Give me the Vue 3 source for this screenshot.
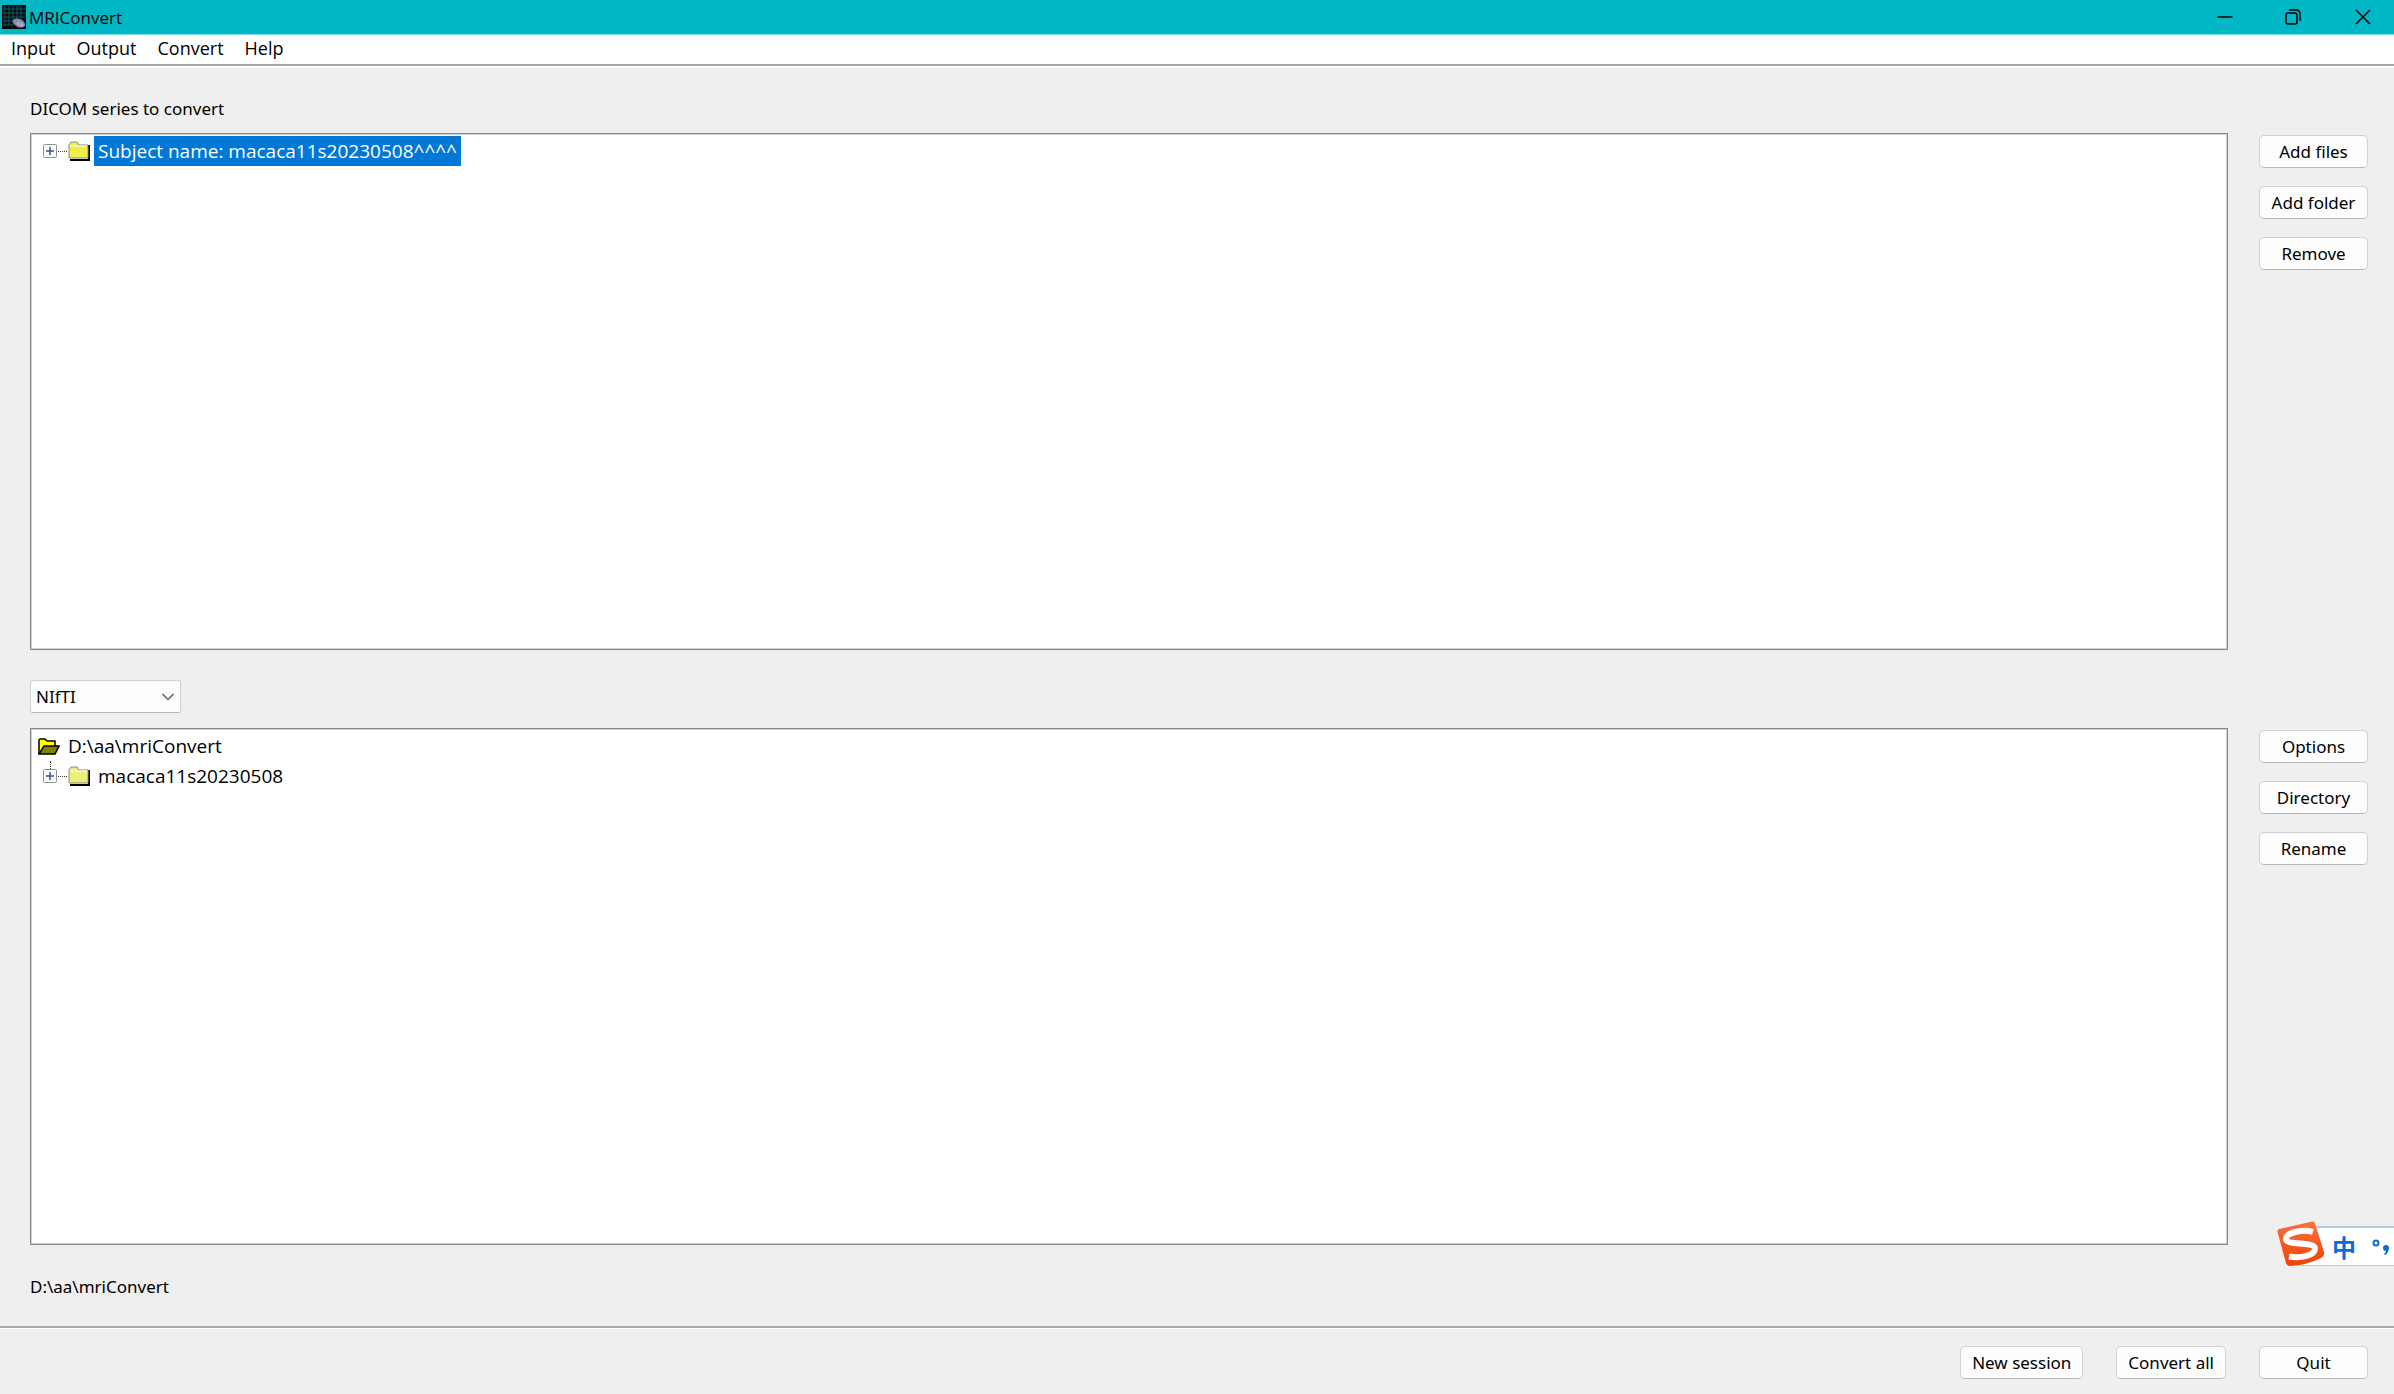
<script setup>
import { ref } from 'vue';

const menus = ['Input', 'Output', 'Convert', 'Help'];
const inputActions = ['Add files', 'Add folder', 'Remove'];
const outputActions = ['Options', 'Directory', 'Rename'];
const sessionActions = ['New session', 'Convert all', 'Quit'];

const format = ref('NIfTI');
const directory = 'D:\\aa\\mriConvert';
const subject = 'Subject name: macaca11s20230508^^^^';
const outputName = 'macaca11s20230508';
</script>

<template>
  <div class="window">
    <header class="titlebar">
      <svg class="app-icon" viewBox="0 0 24 24" aria-hidden="true">
        <rect width="24" height="24" fill="#080b10" />
        <path
          d="M3 1v19M7 1v19M11 1v19M15 1v16M19 1v13M1 4h22M1 8h22M1 12h21M1 16h12M1 20h10"
          stroke="#0b5a5c"
          stroke-width="1"
        />
        <ellipse cx="17" cy="18" rx="6.5" ry="4" transform="rotate(25 17 18)" fill="#8d88b0" />
        <ellipse cx="18" cy="19" rx="4" ry="2" transform="rotate(25 18 19)" fill="#a9a2c8" />
      </svg>
      <h1>MRIConvert</h1>
      <div class="caption-buttons">
        <button type="button" aria-label="Minimize">
          <svg viewBox="0 0 16 16"><path d="M0.5 8h15" /></svg>
        </button>
        <button type="button" aria-label="Restore">
          <svg viewBox="0 0 16 16">
            <rect x="1" y="4" width="11" height="11" rx="2" />
            <path d="M4 1h7.5a3.5 3.5 0 0 1 3.5 3.5V12" />
          </svg>
        </button>
        <button type="button" aria-label="Close">
          <svg viewBox="0 0 16 16"><path d="M1 1l14 14M15 1L1 15" /></svg>
        </button>
      </div>
    </header>

    <nav class="menubar">
      <button v-for="menu in menus" :key="menu" type="button">{{ menu }}</button>
    </nav>

    <main class="content">
      <p class="label">DICOM series to convert</p>

      <section class="panel">
        <ul class="tree">
          <li class="node child">
            <button class="expander" type="button" aria-label="Expand subject">
              <svg viewBox="0 0 14 14">
                <rect x="0.5" y="0.5" width="13" height="13" rx="1" fill="#fafafa" stroke="#919191" />
                <path d="M3 7h8M7 3v8" stroke="#37509b" stroke-width="1.5" />
              </svg>
            </button>
            <span class="branch"></span>
            <svg class="folder" viewBox="0 0 22 20" aria-hidden="true">
              <path d="M2 19h19V4" fill="none" stroke="#000" stroke-width="2" />
              <path d="M1 17V4l2-3h6l2 3h9v13z" fill="#eef04a" stroke="#8b8b80" />
              <path d="M2 5h17" stroke="#fff" />
            </svg>
            <span class="node-text selected">{{ subject }}</span>
          </li>
        </ul>
        <div class="actions">
          <button v-for="action in inputActions" :key="action" class="btn" type="button">{{ action }}</button>
        </div>
      </section>

      <select v-model="format" class="format" aria-label="Output format">
        <option>NIfTI</option>
      </select>

      <section class="panel">
        <ul class="tree">
          <li class="node">
            <svg class="folder-open" viewBox="0 0 22 17" aria-hidden="true">
              <path d="M1 16V2l1-1h5l2 2h8v5" fill="#ffff00" stroke="#000" stroke-width="1.5" />
              <path d="M1 16L6 8h15l-4 8z" fill="#808000" stroke="#000" stroke-width="1.5" />
            </svg>
            <span class="node-text">{{ directory }}</span>
          </li>
          <li class="node child linked">
            <button class="expander" type="button" aria-label="Expand output">
              <svg viewBox="0 0 14 14">
                <rect x="0.5" y="0.5" width="13" height="13" rx="1" fill="#fafafa" stroke="#919191" />
                <path d="M3 7h8M7 3v8" stroke="#37509b" stroke-width="1.5" />
              </svg>
            </button>
            <span class="branch"></span>
            <svg class="folder" viewBox="0 0 22 20" aria-hidden="true">
              <path d="M2 19h19V4" fill="none" stroke="#000" stroke-width="2" />
              <path d="M1 17V4l2-3h6l2 3h9v13z" fill="#eeed7c" stroke="#8b8b80" />
              <path d="M2 5h17" stroke="#fff" />
            </svg>
            <span class="node-text">{{ outputName }}</span>
          </li>
        </ul>
        <div class="actions">
          <button v-for="action in outputActions" :key="action" class="btn" type="button">{{ action }}</button>
        </div>
      </section>

      <p class="label path">{{ directory }}</p>
    </main>

    <footer class="footer">
      <button v-for="action in sessionActions" :key="action" class="btn" type="button">{{ action }}</button>
    </footer>

    <!-- input method bar floating over the window -->
    <aside class="ime">
      <svg class="ime-logo" viewBox="0 0 48 46" aria-hidden="true">
        <defs>
          <linearGradient id="ime-fill" x1="0" y1="0" x2="0" y2="1">
            <stop offset="0" stop-color="#fb7040" />
            <stop offset="1" stop-color="#ef4208" />
          </linearGradient>
        </defs>
        <path
          d="M2 8L35 .5q2-.5 3 2L47 31q1 4-3 6Q30 44 13 45q-3 0-4-3L.5 11Q0 9 2 8z"
          fill="url(#ime-fill)"
        />
        <path
          d="M36 11C27 8 9 11 9 18c0 7 29 2 29 9.500 0 7-14 10-26 8"
          fill="none"
          stroke="#fff"
          stroke-width="6"
        />
      </svg>
      <button class="ime-mode" type="button">中</button>
      <button class="ime-punct" type="button" aria-label="Punctuation">
        <svg viewBox="0 0 18 18">
          <circle cx="4" cy="5" r="2.5" fill="none" stroke="#0a6cd6" stroke-width="2" />
          <path d="M11 10a3 3 0 1 1 6 0c0 3-2 6-4 7l-1-1c1-1 2-2 2-3-2 0-3-1-3-3z" fill="#0a6cd6" />
        </svg>
      </button>
    </aside>
  </div>
</template>

<style>
body {
  margin: 0;
}
</style>

<style scoped>
.window {
  position: relative;
  display: flex;
  flex-direction: column;
  min-height: 100vh;
  overflow: hidden;
  background: #efefef;
  color: #000;
  font: 17px/24px "Noto Sans", "Open Sans", sans-serif;
}

button {
  padding: 0;
  border: 0;
  background: none;
  color: inherit;
  font: inherit;
}

.titlebar {
  display: flex;
  align-items: center;
  height: 34px;
  background: #00b7c6;
  border-bottom: 1px solid #7fdbe3;
}

.app-icon {
  width: 24px;
  height: 24px;
  margin: 0 3px 0 2px;
}

.titlebar h1 {
  flex: 1;
  margin: 0;
  font: 17px/26px "Open Sans", sans-serif;
  padding-top: 2px;
}

.caption-buttons {
  display: flex;
}

.caption-buttons button {
  display: flex;
  align-items: center;
  justify-content: center;
  width: 68px;
  height: 34px;
}

.caption-buttons button:last-child {
  width: 62px;
  margin-left: 5px;
}

.caption-buttons svg {
  width: 16px;
  height: 16px;
  fill: none;
  stroke: #000;
  stroke-width: 1.5;
}

.menubar {
  display: flex;
  align-items: flex-start;
  gap: 21px;
  height: 29px;
  padding-left: 11px;
  background: #fff;
  border-bottom: 2px solid #a6a6a6;
  box-shadow: 0 2px #fff;
  font: 18px/26px "Open Sans", sans-serif;
}

.content {
  display: flex;
  flex: 1;
  flex-direction: column;
  padding: 31px 26px 0 30px;
}

.label {
  margin: 0 0 12px;
}

.panel {
  display: flex;
  flex: 1;
  gap: 31px;
}

.tree {
  flex: 1;
  margin: 0;
  padding: 2px 0 0 7px;
  border: 1px solid #828790;
  outline: 1px solid #cfd1d4;
  outline-offset: -2px;
  background: #fff;
  list-style: none;
  font: 19px/30px "Open Sans", sans-serif;
}

.node {
  display: flex;
  align-items: center;
  height: 30px;
}

.child {
  position: relative;
  padding-left: 5px;
}

.linked::before {
  position: absolute;
  top: 0;
  left: 12px;
  height: 8px;
  border-left: 1px dotted #404040;
  content: "";
}

.expander {
  display: flex;
  width: 14px;
  height: 14px;
}

.branch {
  width: 9px;
  margin: 0 1px;
  border-top: 1px dotted #404040;
}

.folder {
  width: 22px;
  height: 20px;
  margin-right: 4px;
}

.folder-open {
  width: 22px;
  height: 17px;
  margin-right: 4px;
}

.node-text {
  padding: 0 4px;
}

.selected {
  background: #0078d7;
  color: #fff;
}

.actions {
  display: flex;
  flex-direction: column;
  gap: 18px;
  padding-top: 2px;
}

.btn {
  box-sizing: border-box;
  min-width: 109px;
  height: 33px;
  padding: 0 11px;
  border: 1px solid #d0d0d0;
  border-bottom-color: #b8b8b8;
  border-radius: 5px;
  background: #fdfdfd;
}

.format {
  box-sizing: border-box;
  width: 151px;
  height: 33px;
  margin: 30px 0 15px;
  padding: 0 5px;
  border: 1px solid #d0d0d0;
  border-bottom-color: #b8b8b8;
  border-radius: 3px;
  appearance: none;
  background: #fdfdfd
    url("data:image/svg+xml,%3Csvg xmlns='http://www.w3.org/2000/svg' viewBox='0 0 12 8'%3E%3Cpath d='M.5 1l5.5 5.5L11.5 1' fill='none' stroke='%23606060' stroke-width='1.5'/%3E%3C/svg%3E")
    no-repeat right 6px center / 12px 8px;
  color: #000;
  font: inherit;
}

.path {
  margin: 30px 0 27px;
}

.footer {
  display: flex;
  justify-content: flex-end;
  gap: 33px;
  padding: 18px 26px 15px;
  border-top: 2px solid #a6a6a6;
  box-shadow: inset 0 1px #fff;
}

.ime {
  position: absolute;
  right: 0;
  bottom: 128px;
  display: flex;
  align-items: center;
  box-sizing: border-box;
  width: 93px;
  height: 40px;
  border: solid #b4cbe6;
  border-width: 2px 0 1px;
  background: #fff;
  color: #0a6cd6;
}

.ime-logo {
  flex: none;
  width: 48px;
  height: 46px;
  margin: -5px 7px 0 -24px;
}

.ime-mode {
  margin-right: 16px;
  font: bold 24px/30px "Noto Sans CJK SC", sans-serif;
}

.ime-punct {
  display: flex;
}

.ime-punct svg {
  width: 18px;
  height: 18px;
}
</style>
